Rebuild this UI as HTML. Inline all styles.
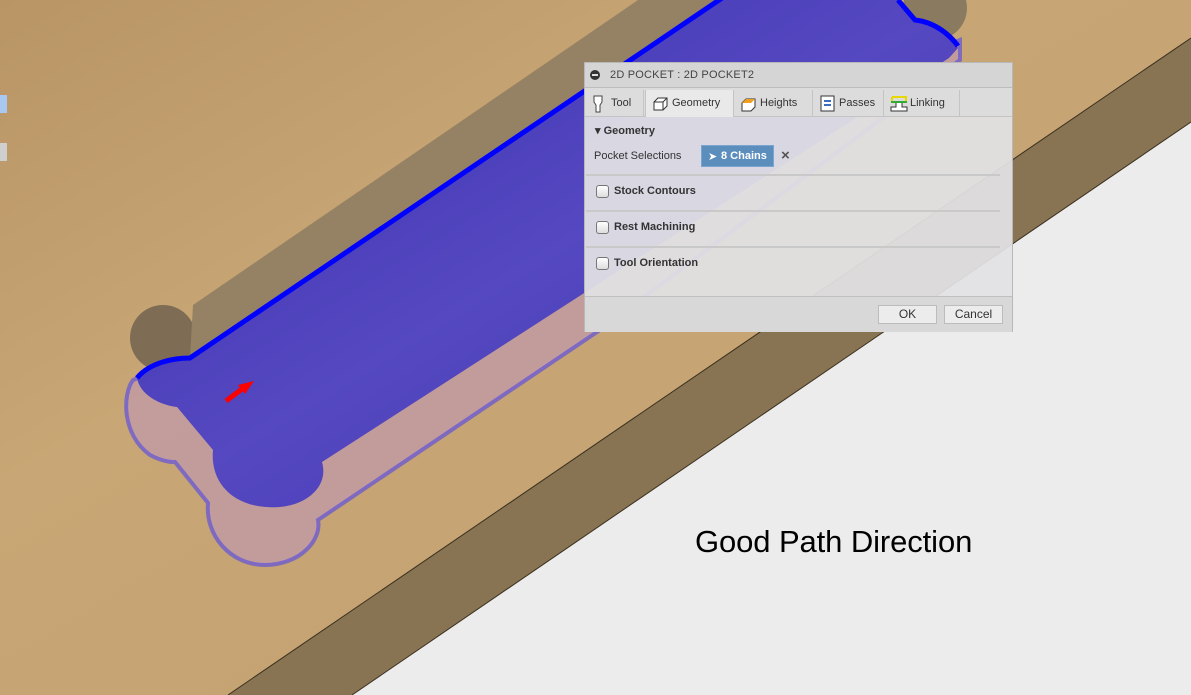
<!DOCTYPE html>
<html><head><meta charset="utf-8"><style>
html,body{margin:0;padding:0;}
body{width:1191px;height:695px;overflow:hidden;position:relative;background:#c4a373;font-family:"Liberation Sans",sans-serif;}
svg.bg{position:absolute;left:0;top:0;}
.dlg{position:absolute;left:584px;top:62px;width:429px;height:270px;background:rgba(226,226,228,0.93);border:1px solid #b8b8b8;box-sizing:border-box;font-size:11px;color:#333;}
.title{height:24px;background:#d5d5d6;border-bottom:1px solid #bdbdbd;line-height:24px;padding-left:25px;color:#444;position:relative;letter-spacing:0.2px}
.title:before{content:"";position:absolute;left:5px;top:7px;width:10px;height:10px;border-radius:50%;background:#333;}
.title:after{content:"";position:absolute;left:7px;top:11px;width:6px;height:2px;background:#ddd;}
.tabs{height:28px;border-bottom:1px solid #c4c4c4;position:relative;background:#dcdcdd}
.tab{position:absolute;top:2px;height:26px;line-height:26px;border-right:1px solid #c4c4c4;padding-left:26px;color:#333;font-size:11px;box-sizing:border-box}
.tab.act{background:#e9e9ea;border-left:1px solid #c4c4c4;top:2px;height:27px}
.tab svg{position:absolute;left:6px;top:5px}
.sec{position:absolute;left:10px;font-weight:bold;color:#333}
.sep{position:absolute;left:1px;width:414px;height:2px;background:#c9c9ca;}
.cb{position:absolute;left:11px;width:11px;height:11px;border:1px solid #777;border-radius:3px;background:linear-gradient(#fff,#ddd);}
.btn{position:absolute;top:242px;height:19px;background:#ececec;border:1px solid #bcbcbc;box-sizing:border-box;text-align:center;line-height:17px;font-size:12px;color:#333}
</style></head><body>
<svg class="bg" width="1191" height="695" viewBox="0 0 1191 695">
<defs>
<linearGradient id="wood" x1="0" y1="0" x2="1" y2="1">
<stop offset="0" stop-color="#b99565"/><stop offset="0.35" stop-color="#c8a675"/><stop offset="0.7" stop-color="#c4a272"/><stop offset="1" stop-color="#b89563"/></linearGradient>
<linearGradient id="side" x1="0" y1="0" x2="1" y2="1">
<stop offset="0" stop-color="#86714f"/><stop offset="1" stop-color="#8a7654"/></linearGradient>
<linearGradient id="flr" x1="0" y1="0" x2="1" y2="1">
<stop offset="0" stop-color="#3a2fb0"/><stop offset="0.5" stop-color="#5548c0"/><stop offset="1" stop-color="#3e33b2"/></linearGradient>
</defs>
<rect width="1191" height="695" fill="url(#wood)"/>
<polygon points="228,695 1191,38 1191,122 352,695" fill="url(#side)"/>
<polygon points="352,695 1191,122 1191,695" fill="#ececec"/>
<path d="M228,695 L1191,38 M352,695 L1191,122" stroke="#3a3020" stroke-width="1"/>
<path d="M133,380 C122,395 122,435 150,455 C165,463 175,462 175,462 L208,503 C205,535 230,565 265,565 C300,565 322,540 318,520 L600,330 L960,60 L960,40 L190,357 Z" fill="rgba(190,150,185,0.55)" stroke="rgba(80,70,230,0.6)" stroke-width="4"/>
<circle cx="163" cy="338" r="33" fill="#7e6d54"/>
<circle cx="935" cy="8" r="32" fill="#8a7a60"/>
<polygon points="193,305 638,0 722,0 190,358" fill="#958264"/>
<path d="M137,378 C150,362 175,358 190,358 L722,0 L898,0 C905,10 910,20 915,20 C935,22 950,35 958,48 L949,58 L322,462 C330,490 300,510 267,507 C230,505 210,480 213,450 L177,407 C160,405 140,395 137,378 Z" fill="url(#flr)"/>
<path d="M137,378 C150,362 175,358 190,358 L722,-2" stroke="#0000ff" stroke-width="5" fill="none"/>
<path d="M898,0 L915,20 C935,22 950,35 958,46" stroke="#0000ff" stroke-width="5" fill="none"/>
<path d="M226,401 L242,389" stroke="#f00" stroke-width="5"/>
<polygon points="254,381 238,385 245,394" fill="#f00"/>
<rect x="0" y="95" width="7" height="18" fill="#a9c8ef"/>
<rect x="0" y="143" width="7" height="18" fill="#cfcfcf"/>
<text x="695" y="552" font-family="Liberation Sans" font-size="31" fill="#000" letter-spacing="-0.1">Good Path Direction</text>
</svg>
<div class="dlg">
<div class="title">2D POCKET : 2D POCKET2</div>
<div class="tabs">
<div class="tab" style="left:0;width:59px"><svg width="14" height="18"><path d="M3,1 h8 v6 l-2,3 v7 h-4 v-7 l-2,-3z" fill="#fff" stroke="#444"/></svg>Tool</div>
<div class="tab act" style="left:60px;width:89px"><svg width="18" height="18"><path d="M2,7 l4,-4 h9 v8 l-4,4 h-9z M2,7 h9 v8 M11,7 l4,-4" fill="#fff" stroke="#333"/></svg>Geometry</div>
<div class="tab" style="left:149px;width:79px"><svg width="18" height="18"><path d="M2,8 l4,-4 h9 v8 l-4,4 h-9z" fill="#fff" stroke="#333"/><path d="M2,8 l4,-4 h9 l-4,4z" fill="#f0a020"/></svg>Heights</div>
<div class="tab" style="left:228px;width:71px"><svg width="18" height="18"><rect x="2" y="1" width="13" height="15" fill="#fff" stroke="#333"/><rect x="5" y="5" width="7" height="2" fill="#3a6fc0"/><rect x="5" y="9" width="7" height="2" fill="#3a6fc0"/></svg>Passes</div>
<div class="tab" style="left:299px;width:76px"><svg width="18" height="18"><path d="M2,2 h14 v5 M2,2 v5" stroke="#e8d800" stroke-width="2" fill="none"/><path d="M1,7 h16" stroke="#3a3" stroke-width="2"/><path d="M6,8 v4 h-5 v4 h16 v-4 h-5 v-4" stroke="#333" fill="#fff"/></svg>Linking</div>
</div>
<div class="sec" style="top:61px;font-size:11px">▾ Geometry</div>
<div style="position:absolute;left:9px;top:87px;color:#333">Pocket Selections</div>
<div style="position:absolute;left:116px;top:82px;width:73px;height:22px;background:#5b8dbd;border:1px solid #7aa5d0;box-sizing:border-box;color:#fff;font-weight:bold;line-height:20px;padding-left:19px">8 Chains<span style="position:absolute;left:6px;top:1px;font-weight:normal">➤</span></div>
<div style="position:absolute;left:196px;top:84px;font-size:15px;color:#555;font-weight:bold">×</div>
<div class="sep" style="top:111px"></div>
<div class="cb" style="top:122px"></div><div class="sec" style="top:122px;left:29px">Stock Contours</div>
<div class="sep" style="top:147px"></div>
<div class="cb" style="top:158px"></div><div class="sec" style="top:158px;left:29px">Rest Machining</div>
<div class="sep" style="top:183px"></div>
<div class="cb" style="top:194px"></div><div class="sec" style="top:194px;left:29px">Tool Orientation</div>
<div style="position:absolute;left:0;top:233px;width:427px;height:35px;background:#d8d8d9;border-top:1px solid #c0c0c0"></div>
<div class="btn" style="left:293px;width:59px">OK</div>
<div class="btn" style="left:359px;width:59px">Cancel</div>
</div>
</body></html>
